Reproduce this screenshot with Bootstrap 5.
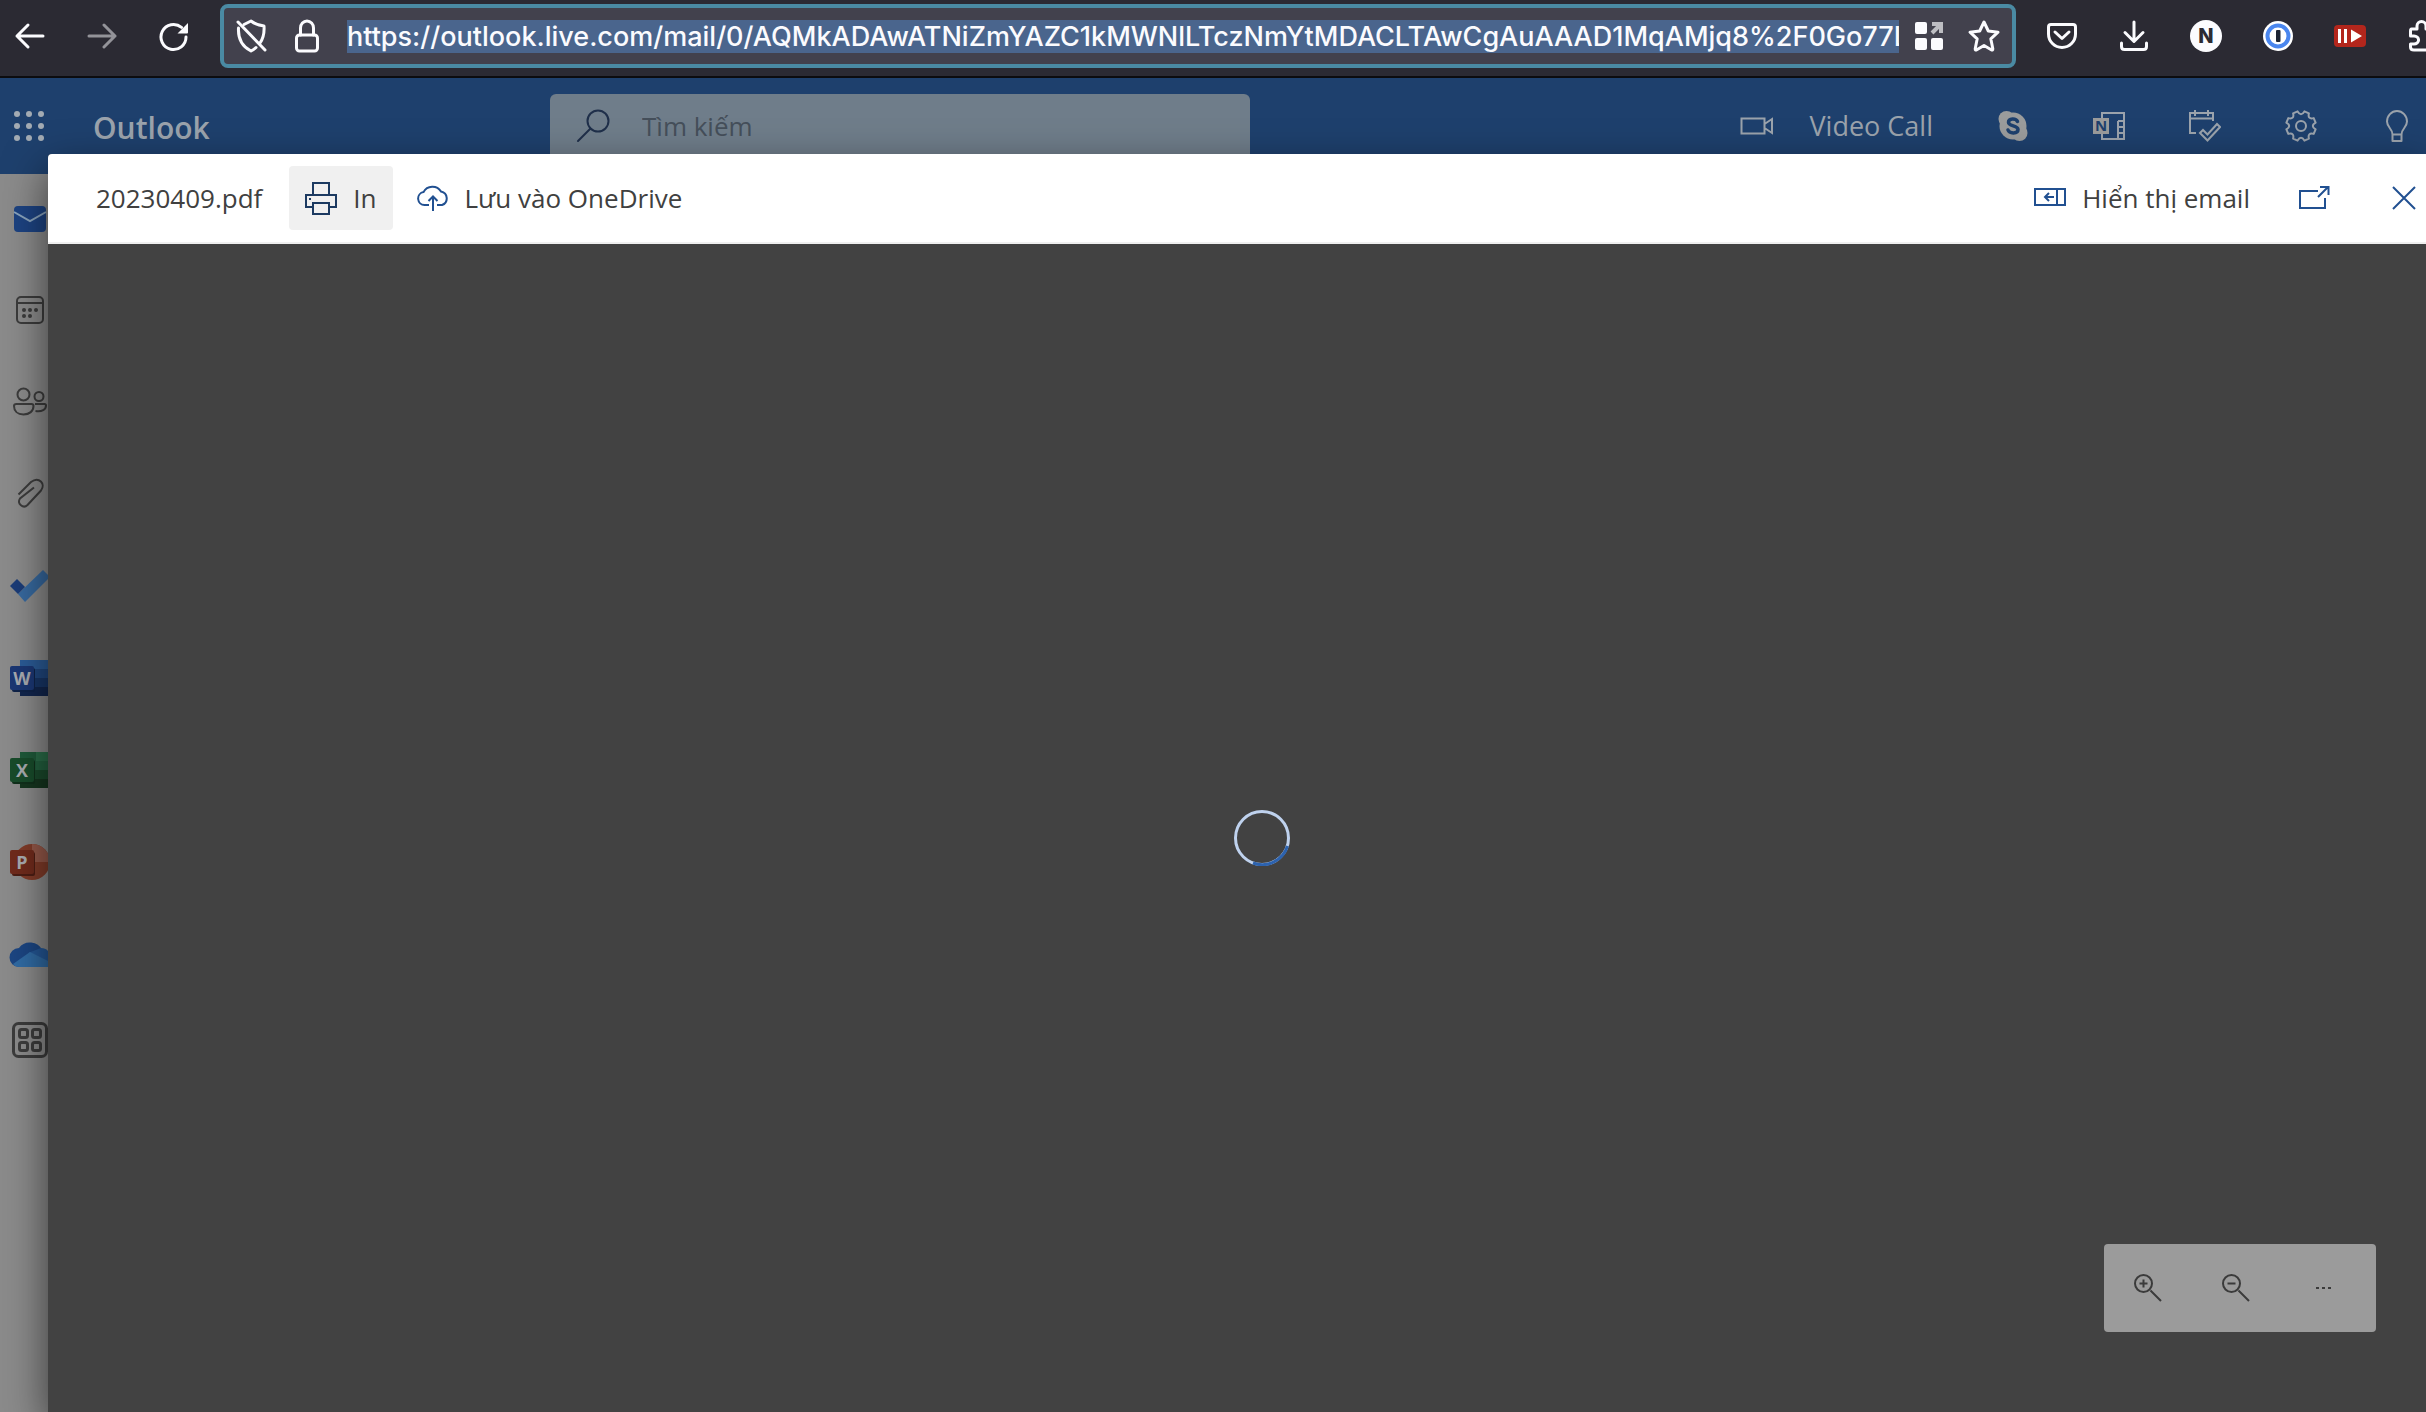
<!DOCTYPE html>
<html lang="vi">
<head>
<meta charset="utf-8">
<meta name="viewport" content="width=device-width, initial-scale=1">
<title>Outlook – 20230409.pdf</title>
<link href="https://cdn.jsdelivr.net/npm/bootstrap@5.3.0/dist/css/bootstrap.min.css" rel="stylesheet">
<style>
body{font-family:"Open Sans","Noto Sans",sans-serif;font-size:26px;line-height:36px;background:#424242}
button,input{font:inherit}
svg{display:block;flex:none}
.ln{fill:none;stroke:currentColor;stroke-width:2}
.bold-ln{stroke-width:3;stroke-linecap:round;stroke-linejoin:round}
.plain{border:0;background:none;padding:0;color:inherit}
.blue{color:#215091}
.navy{color:#1c3a61}

.toolbar-top{height:78px;background:#2b2a33;border-bottom:2px solid #0c0c0f;color:#fbfbfe;padding:4px 0 8px 14px}
.nav-tools{width:206px;gap:40px}
.urlbar{min-width:0;height:64px;border:4px solid #4a8aa3;border-radius:8px;background:#42414d;padding:0 11px}
.url-input{min-width:0;height:33px;border:0;border-radius:0;padding:0;background:#4a658d;color:#fbfbfe;font-family:Inter,"Liberation Sans",sans-serif;font-size:27px;font-weight:500;line-height:33px;outline:0}
.ext-tools{gap:40px;padding-left:30px;margin-right:-12px}

.app-shell{min-height:0}
.app-header{height:96px;background:#1e406d;color:#9ba3ac}
.tools-left{width:550px;padding-left:13px;gap:48px}
.brand{font-size:30px;font-weight:600;padding-top:4px}
.search{width:700px;height:68px;background:#6f7d8a;border-radius:6px;color:#1f2f4a;padding:0 26px 4px;gap:32px}
.search input{color:#454f5a}
.search input::placeholder{color:#454f5a;opacity:1}
.head-tools{gap:64px;padding-right:13px}
.call-btn{gap:36px;font-size:27px}

.rail{width:62px;background:#8b8b8b;color:#3c3c3c}
.rail a{height:92px;color:inherit}
.rail a:first-child{height:90px}
.rail a:last-child{height:80px}

.viewer{left:48px;top:154px;background:#424242;border-top-left-radius:4px;box-shadow:0 16px 44px rgba(0,0,0,.6)}
.viewer-bar{height:90px;background:#fff;border-bottom:2px solid #efefef;border-top-left-radius:4px;color:#404040;padding:0 10px 0 48px}
.file-name{margin-right:27px}
.print-btn{height:64px;background:#f0f0f0;border-radius:4px;padding:0 16px;gap:16px}
.right-tools{gap:48px}
.popout{margin-right:14px}
.loading{padding:20px 0 0 50px}
.zoom-box{right:50px;bottom:80px;background:#9b9b9b;border-radius:4px;width:272px;height:88px;color:#3b3b3b}
.zoom-box button{width:88px}
</style>
<script src="https://cdn.jsdelivr.net/npm/bootstrap@5.3.0/dist/js/bootstrap.bundle.min.js"></script>
</head>
<body class="vh-100 overflow-hidden d-flex flex-column position-relative">

<nav class="toolbar-top d-flex align-items-center flex-shrink-0 overflow-hidden" aria-label="Trình duyệt">
  <div class="nav-tools d-flex align-items-center flex-shrink-0">
    <button class="plain" aria-label="Quay lại"><svg width="32" height="32" viewBox="0 0 32 32"><path class="ln bold-ln" d="M29 16H3M14 5L3 16l11 11"/></svg></button>
    <button class="plain opacity-50" aria-label="Tiến"><svg width="32" height="32" viewBox="0 0 32 32"><path class="ln bold-ln" d="M3 16h26M18 5l11 11-11 11"/></svg></button>
    <button class="plain" aria-label="Tải lại"><svg width="32" height="32" viewBox="0 0 32 32"><path class="ln bold-ln" d="M28 17a12.500 12.500 0 1 1-4.500-9.600"/><path fill="currentColor" d="M30 3v9.500a1 1 0 0 1-1 1h-9.500z"/></svg></button>
  </div>
  <div class="urlbar d-flex align-items-center flex-grow-1">
    <svg width="32" height="34" viewBox="0 0 32 34"><g class="ln bold-ln"><path d="M9 5.500l7-3.500c4 3 8 4.500 13 5 .5 7-.5 12-4 17M3.500 9C3 18 6 27 16 32c2-1 3.500-2 5-3.500"/><path d="M3 3l27 28"/></g></svg>
    <svg class="ms-4" width="32" height="34" viewBox="0 0 32 34"><g class="ln bold-ln"><rect x="5.500" y="16" width="21" height="16" rx="3"/><path d="M9.500 16V9a6.500 7 0 0 1 13 0v7"/></g></svg>
    <input class="url-input flex-grow-1 ms-4 me-3" aria-label="Địa chỉ" value="https://outlook.live.com/mail/0/AQMkADAwATNiZmYAZC1kMWNlLTczNmYtMDACLTAwCgAuAAAD1MqAMjq8%2F0Go77LnAAA">
    <svg width="28" height="30" viewBox="0 0 28 30"><g fill="currentColor"><rect y="1" width="12" height="12" rx="2"/><rect y="17" width="12" height="12" rx="2"/><rect x="16" y="17" width="12" height="12" rx="2"/></g><path fill="none" stroke="#bdbdc2" stroke-width="4" d="M17 12l8-8M17 3h9v9"/></svg>
    <button class="plain ms-4" aria-label="Đánh dấu trang"><svg width="34" height="34" viewBox="0 0 34 34"><path class="ln bold-ln" d="M17 3l4.300 9 9.700 1.200-7.200 6.600 2 9.900q.2 2-1.600 1L17 26.500l-7.200 4.200q-1.800 1-1.600-1l2-9.900L3 13.200 12.700 12z"/></svg></button>
  </div>
  <div class="ext-tools d-flex align-items-center flex-shrink-0">
    <button class="plain" aria-label="Pocket"><svg width="32" height="32" viewBox="0 0 32 32"><g class="ln bold-ln"><path d="M5 4.500h22q2.500 0 2.500 2.500v7a13.500 13.500 0 0 1-27 0V7q0-2.500 2.500-2.500z"/><path d="M9 12l7 6.500 7-6.500"/></g></svg></button>
    <button class="plain" aria-label="Tải xuống"><svg width="32" height="32" viewBox="0 0 32 32"><path class="ln bold-ln" d="M16 2v19M7 12.500l9 9 9-9M3.500 23v3.500q0 3 3 3h19q3 0 3-3V23"/></svg></button>
    <button class="plain" aria-label="N"><svg width="32" height="32" viewBox="0 0 32 32"><circle cx="16" cy="16" r="16" fill="#fbfbfe"/><text x="16" y="23" text-anchor="middle" font-family="Inter" font-weight="800" font-size="20" fill="#2b2a33">N</text></svg></button>
    <button class="plain" aria-label="1Password"><svg width="32" height="32" viewBox="0 0 32 32"><circle cx="16" cy="16" r="15" fill="#fff"/><circle cx="16" cy="16" r="10.500" fill="#fff" stroke="#4a86ee" stroke-width="4"/><rect x="14" y="10" width="4.500" height="12" rx="1" fill="#1d2433"/></svg></button>
    <button class="plain" aria-label="Phát"><svg width="32" height="32" viewBox="0 0 32 32"><rect y="5" width="32" height="22" rx="4" fill="#b3261c"/><path fill="#fff" d="M4 9h3v14H4zM10 9h3v14h-3zM17 9.500l11 6.500-11 6.500z"/></svg></button>
    <button class="plain" aria-label="Tiện ích"><svg width="32" height="32" viewBox="0 0 32 32"><path class="ln bold-ln" d="M5.500 9H11V6a4.500 4.500 0 0 1 9 0v3h7v21H8q-3.500 0-3.500-3v-3H8a4 3.500 0 0 0 0-8H4.500v-5q0-2 1-2z"/></svg></button>
  </div>
</nav>

<div class="app-shell d-flex flex-column flex-grow-1 overflow-hidden">
  <header class="app-header d-flex align-items-start flex-shrink-0">
    <div class="tools-left d-flex align-items-center h-100 flex-shrink-0">
      <button class="plain" aria-label="Trình khởi động ứng dụng"><svg width="32" height="32" viewBox="0 0 32 32" fill="#a3abb3"><circle cx="4" cy="4" r="3"/><circle cx="16" cy="4" r="3"/><circle cx="28" cy="4" r="3"/><circle cx="4" cy="16" r="3"/><circle cx="16" cy="16" r="3"/><circle cx="28" cy="16" r="3"/><circle cx="4" cy="28" r="3"/><circle cx="16" cy="28" r="3"/><circle cx="28" cy="28" r="3"/></svg></button>
      <a href="#" class="brand text-decoration-none text-reset">Outlook</a>
    </div>
    <label class="search d-flex align-items-center mt-3 flex-shrink-1">
      <svg width="34" height="34" viewBox="0 0 34 34"><g class="ln" stroke-linecap="round"><circle cx="22" cy="12" r="10.500"/><path d="M14.500 19.500L2 32"/></g></svg>
      <input class="plain flex-grow-1" type="search" placeholder="Tìm kiếm" aria-label="Tìm kiếm">
    </label>
    <div class="head-tools d-flex align-items-center h-100 ms-auto flex-shrink-0">
      <button class="plain call-btn d-flex align-items-center"><svg width="34" height="20" viewBox="0 0 34 20"><path class="ln" d="M1.500 2.500h23v15h-23zM24.500 8l7.500-5v14l-7.500-5"/></svg>Video Call</button>
      <button class="plain" aria-label="Skype"><svg width="32" height="32" viewBox="0 0 32 32"><g fill="#9b9c9c"><circle cx="16" cy="16" r="13.500"/><circle cx="9.500" cy="9" r="8"/><circle cx="22.500" cy="23" r="8"/></g><path fill="none" stroke="#1e406d" stroke-width="3.500" stroke-linecap="round" d="M20.500 11.500c-1.500-3.500-9-3.500-9 .8 0 4.500 9.500 2.700 9.500 7.200 0 4.500-8.500 4.500-10 .5"/></svg></button>
      <button class="plain" aria-label="OneNote"><svg width="32" height="32" viewBox="0 0 32 32"><path class="ln" d="M9 9V3h22v26H9v-6M25 11v18M25 11h6M25 17h6M25 23h6"/><rect y="8" width="16" height="16" fill="#9b9c9c"/><text x="8" y="21" text-anchor="middle" font-family="Open Sans" font-weight="700" font-size="15" fill="#1e406d">N</text></svg></button>
      <button class="plain" aria-label="Ngày của tôi"><svg width="32" height="32" viewBox="0 0 32 32"><path class="ln" d="M7 23H1V3h23v8M1 8.500h23M6 0v6M19 0v6M11 23l3-3 4.500 4.500L28 14l3 3-12.500 13.500z"/></svg></button>
      <button class="plain" aria-label="Cài đặt"><svg width="32" height="32" viewBox="0 0 32 32"><circle class="ln" cx="16" cy="16" r="5"/><path class="ln" stroke-linejoin="round" d="M30.600 19.400L28.700 23.900Q22.400 22.400 23.900 28.700L19.400 30.600Q16 25 12.600 30.600L8.100 28.700Q9.600 22.400 3.300 23.900L1.400 19.400Q7 16 1.400 12.600L3.300 8.100Q9.600 9.600 8.100 3.300L12.600 1.400Q16 7 19.400 1.400L23.900 3.300Q22.400 9.600 28.700 8.100L30.600 12.600Q25 16 30.600 19.400Z"/></svg></button>
      <button class="plain" aria-label="Mẹo"><svg width="32" height="32" viewBox="0 0 32 32"><path class="ln" stroke-linejoin="round" d="M11.500 24.500c0-6-5.500-7-5.500-13a10 10.500 0 0 1 20 0c0 6-5.500 7-5.500 13zM11.500 24.500V31h9v-6.500"/></svg></button>
    </div>
  </header>

  <nav class="rail d-flex flex-column flex-grow-1" aria-label="Ứng dụng">
    <a href="#" class="d-flex align-items-center flex-shrink-0" aria-label="Thư"><svg width="48" height="36" viewBox="0 0 48 36"><rect x="14" y="5" width="32" height="26" rx="4" fill="#1d4382"/><path fill="none" stroke="#8aa4bd" stroke-width="2" d="M14 11l16 9 16-9"/></svg></a>
    <a href="#" class="d-flex align-items-center flex-shrink-0" aria-label="Lịch"><svg width="48" height="36" viewBox="0 0 48 36"><rect class="ln" x="17" y="5" width="26" height="26" rx="4"/><path class="ln" d="M17 11h26"/><g fill="currentColor"><circle cx="24" cy="18" r="2"/><circle cx="30" cy="18" r="2"/><circle cx="36" cy="18" r="2"/><circle cx="24" cy="24" r="2"/><circle cx="30" cy="24" r="2"/></g></svg></a>
    <a href="#" class="d-flex align-items-center flex-shrink-0" aria-label="Mọi người"><svg width="48" height="36" viewBox="0 0 48 36"><g class="ln"><circle cx="23.500" cy="10.500" r="6"/><circle cx="39" cy="12.500" r="4.500"/><path d="M16.500 20h15q2 0 2 2c0 5-4 8.500-10 8.500S14 27 14 22q0-2 2.500-2zM35 20h9.500q1.500 0 1.500 1.500c0 4-4 6.500-10.500 5.500"/></g></svg></a>
    <a href="#" class="d-flex align-items-center flex-shrink-0" aria-label="Tệp"><svg width="48" height="36" viewBox="0 0 48 36"><path class="ln" d="M18.500 18.500L31 6c8-6 15 2 10 8.500L27.500 29c-4 4-11-1-7.500-6.500L34 11.500"/></svg></a>
    <a href="#" class="d-flex align-items-center flex-shrink-0" aria-label="To Do"><svg width="50" height="36" viewBox="0 0 50 36"><path fill="#37699f" d="M18 26l7 8 25-25-7-7z"/><path fill="#1b3c78" d="M10 18l7-7 8 8-7 7z"/></svg></a>
    <a href="#" class="d-flex align-items-center flex-shrink-0" aria-label="Word"><svg width="50" height="36" viewBox="0 0 50 36"><path fill="#2b5c98" d="M20 0h30v9H20z"/><path fill="#20477f" d="M20 9h30v9H20z"/><path fill="#183667" d="M20 18h30v9H20z"/><path fill="#12264e" d="M20 27h30v9H20z"/><rect x="12" y="8" width="23" height="24" rx="2" fill="#0f2349"/><rect x="10" y="6" width="24" height="24" rx="2" fill="#1b3774"/><text x="22" y="25" text-anchor="middle" font-family="Open Sans" font-weight="700" font-size="18" fill="#a9abb0">W</text></svg></a>
    <a href="#" class="d-flex align-items-center flex-shrink-0" aria-label="Excel"><svg width="50" height="36" viewBox="0 0 50 36"><path fill="#1f5a3a" d="M20 0h30v18H20z"/><path fill="#2b6e49" d="M36 0h14v9H36z"/><path fill="#23613f" d="M36 9h14v9H36z"/><path fill="#1a4a2c" d="M20 18h30v9H20z"/><path fill="#15361f" d="M20 27h30v9H20z"/><rect x="12" y="8" width="23" height="24" rx="2" fill="#10301b"/><rect x="10" y="6" width="24" height="24" rx="2" fill="#184c2b"/><text x="22" y="25" text-anchor="middle" font-family="Open Sans" font-weight="700" font-size="18" fill="#a9abb0">X</text></svg></a>
    <a href="#" class="d-flex align-items-center flex-shrink-0" aria-label="PowerPoint"><svg width="50" height="36" viewBox="0 0 50 36"><circle cx="32" cy="18" r="18" fill="#823c29"/><path fill="#96594a" d="M32 0a18 18 0 0 1 18 18H32z"/><rect x="12" y="8" width="23" height="24" rx="2" fill="#4d1e14"/><rect x="10" y="6" width="24" height="24" rx="2" fill="#702b1c"/><text x="22" y="25" text-anchor="middle" font-family="Open Sans" font-weight="700" font-size="18" fill="#a9abb0">P</text></svg></a>
    <a href="#" class="d-flex align-items-center flex-shrink-0" aria-label="OneDrive"><svg width="50" height="36" viewBox="0 0 50 36"><path fill="#1c4683" d="M19 31a9 9 0 0 1 0-19 13 12 0 0 1 23 2z"/><path fill="#245796" d="M28 17l13-5c6 0 9 4 9 9v9z"/><path fill="#306ba4" d="M13 28l17-12 20 10v5H19q-4 0-6-3z"/></svg></a>
    <a href="#" class="d-flex align-items-center flex-shrink-0" aria-label="Ứng dụng khác"><svg width="50" height="36" viewBox="0 0 50 36"><g class="ln bold-ln"><rect x="13.500" y="1.500" width="33" height="33" rx="5"/><rect x="19.500" y="7.500" width="8" height="8" rx="2"/><rect x="32.500" y="7.500" width="8" height="8" rx="2"/><rect x="19.500" y="20.500" width="8" height="8" rx="2"/><rect x="32.500" y="20.500" width="8" height="8" rx="2"/></g></svg></a>
  </nav>
</div>

<main class="viewer position-absolute end-0 bottom-0 d-flex flex-column">
  <div class="viewer-bar d-flex align-items-center flex-shrink-0">
    <span class="file-name">20230409.pdf</span>
    <button class="plain print-btn d-flex align-items-center me-4"><svg class="navy" width="32" height="34" viewBox="0 0 32 34"><path class="ln" d="M8 14V2h16v12M8 26H1V14h30v12h-7M8 22h16v11H8z"/><path fill="currentColor" d="M4 17h2v2H4z"/></svg>In</button>
    <button class="plain d-flex align-items-center gap-3"><svg class="blue" width="32" height="28" viewBox="0 0 32 28"><path class="ln" d="M12 21H7.500a6.500 6.500 0 0 1-1-12.900A10 10 0 0 1 24 7.500 7 7 0 0 1 25 21h-5M16 27V13M11.500 17l4.500-4.500L20.500 17"/></svg>Lưu vào OneDrive</button>
    <div class="right-tools d-flex align-items-center ms-auto">
      <button class="plain d-flex align-items-center gap-3"><svg class="blue" width="32" height="24" viewBox="0 0 32 24"><path class="ln" d="M1 3h30v16H1zM23 3v16M20 11h-9M15 7l-4 4 4 4"/></svg>Hiển thị email</button>
      <button class="plain blue popout" aria-label="Mở trong cửa sổ mới"><svg width="32" height="26" viewBox="0 0 32 26"><path class="ln" d="M20 6H2v17h25V13M20 12L30 2M22 2h8.500v8"/></svg></button>
      <button class="plain blue" aria-label="Đóng"><svg width="24" height="26" viewBox="0 0 24 26"><path class="ln" d="M1 2l22 22M23 2L1 24"/></svg></button>
    </div>
  </div>
  <div class="loading flex-grow-1 d-flex align-items-center justify-content-center" role="status" aria-label="Đang tải">
    <svg width="56" height="56" viewBox="0 0 56 56"><circle cx="28" cy="28" r="26.500" fill="none" stroke="#bfd2ee" stroke-width="3"/><path fill="none" stroke="#2c62ae" stroke-width="3" d="M53.500 36A26.500 26.500 0 0 1 19 53"/></svg>
  </div>
  <div class="zoom-box position-absolute d-flex">
    <button class="plain d-flex align-items-center justify-content-center" aria-label="Phóng to"><svg width="28" height="28" viewBox="0 0 28 28"><path class="ln" d="M16.500 16.500L27 27M9.500 5.500v8M5.500 9.500h8"/><circle class="ln" cx="9.500" cy="9.500" r="8.500"/></svg></button>
    <button class="plain d-flex align-items-center justify-content-center" aria-label="Thu nhỏ"><svg width="28" height="28" viewBox="0 0 28 28"><path class="ln" d="M16.500 16.500L27 27M5.500 9.500h8"/><circle class="ln" cx="9.500" cy="9.500" r="8.500"/></svg></button>
    <button class="plain d-flex align-items-center justify-content-center" aria-label="Thêm"><svg width="16" height="4" viewBox="0 0 16 4" fill="currentColor"><rect x="0" y="1" width="3" height="2"/><rect x="6" y="1" width="3" height="2"/><rect x="12" y="1" width="3" height="2"/></svg></button>
  </div>
</main>
</body>
</html>
